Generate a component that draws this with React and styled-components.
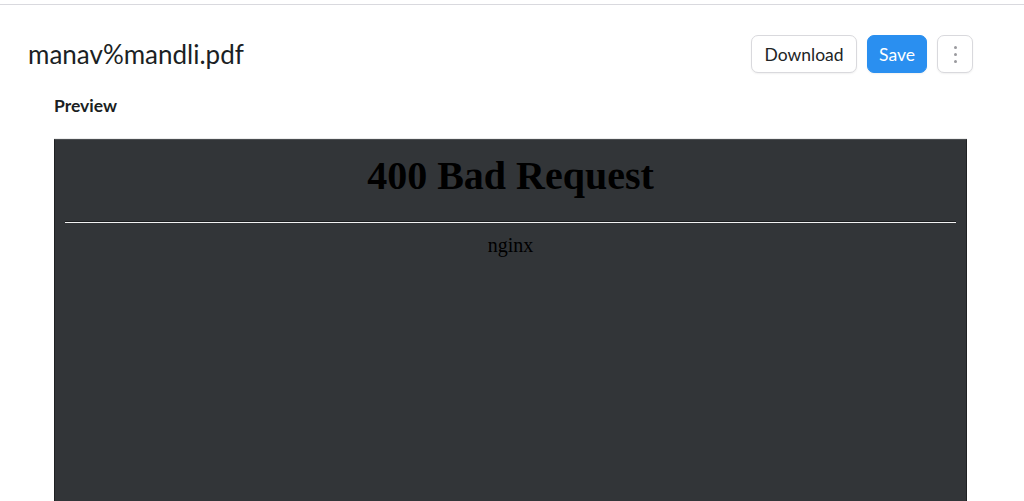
import React from "react";
import styled, { createGlobalStyle } from "styled-components";

const GlobalStyle = createGlobalStyle`
  html, body {
    margin: 0;
    padding: 0;
    background: #ffffff;
    overflow: hidden;
  }
  body {
    font-family: Lato, "Open Sans", "Liberation Sans", sans-serif;
    color: #1b1f23;
  }
`;

const Page = styled.div`
  height: 501px;
  overflow: hidden;
  display: flex;
  flex-direction: column;
`;

const TopStrip = styled.div`
  height: 4px;
  flex: none;
  border-bottom: 1px solid #d9d9de;
`;

const TitleRow = styled.div`
  display: flex;
  align-items: center;
  justify-content: space-between;
  padding: 30px 51px 0 28px;
`;

const Title = styled.h2`
  margin: 0;
  font-size: 26px;
  line-height: 31px;
  font-weight: 400;
  color: #1b1f24;
`;

const Actions = styled.div`
  display: flex;
  gap: 10px;
`;

const Button = styled.button`
  height: 38px;
  padding: 0 ${(p) => (p.$icon ? "0" : p.$primary ? "11px" : "12.5px")};
  width: ${(p) => (p.$icon ? "36px" : "auto")};
  border-radius: 7px;
  font-family: Lato, "Open Sans", sans-serif;
  font-size: 17.5px;
  border: 1px solid ${(p) => (p.$primary ? "#2a8ff0" : "#d9d9dd")};
  background: ${(p) => (p.$primary ? "#2a8ff0" : "#ffffff")};
  color: ${(p) => (p.$primary ? "#ffffff" : "#222426")};
  box-shadow: 0 1px 2px rgba(0, 0, 0, 0.06);
  display: flex;
  align-items: center;
  justify-content: center;
  cursor: pointer;
`;

const Dots = styled.span`
  display: flex;
  flex-direction: column;
  gap: 4px;
  span {
    width: 3px;
    height: 3px;
    border-radius: 50%;
    background: #9a9a9e;
  }
`;

const Section = styled.div`
  padding: 0 57px 0 54px;
  display: flex;
  flex-direction: column;
`;

const Label = styled.div`
  margin-top: 22px;
  font-size: 17.5px;
  font-weight: 700;
  color: #1b1f23;
  line-height: 22px;
`;

const Frame = styled.div`
  margin-top: 22px;
  height: 480px;
  flex: none;
  background: #323538;
  border: 1px solid #1f2123;
  border-top-color: #4a4d50;
  box-shadow: 0 -1px 0 #ececec;
  padding: 0 10px;
  font-family: "Liberation Serif", "Times New Roman", serif;
  color: #000000;
  text-align: center;
`;

const Heading = styled.h1`
  margin: 14px 0 0;
  font-size: 40px;
  font-weight: 700;
  line-height: 44px;
`;

const Rule = styled.hr`
  margin: 23px 0 0;
  border: none;
  border-top: 1px solid #1c1e20;
  border-bottom: 1px solid #f2f2f2;
  height: 0;
`;

const Server = styled.div`
  margin-top: 11px;
  font-size: 20px;
  line-height: 23px;
`;

export default function App() {
  return (
    <Page>
      <GlobalStyle />
      <TopStrip />
      <TitleRow>
        <Title>manav%mandli.pdf</Title>
        <Actions>
          <Button>Download</Button>
          <Button $primary>Save</Button>
          <Button $icon aria-label="More">
            <Dots>
              <span />
              <span />
              <span />
            </Dots>
          </Button>
        </Actions>
      </TitleRow>
      <Section>
        <Label>Preview</Label>
        <Frame>
          <Heading>400 Bad Request</Heading>
          <Rule />
          <Server>nginx</Server>
        </Frame>
      </Section>
    </Page>
  );
}
